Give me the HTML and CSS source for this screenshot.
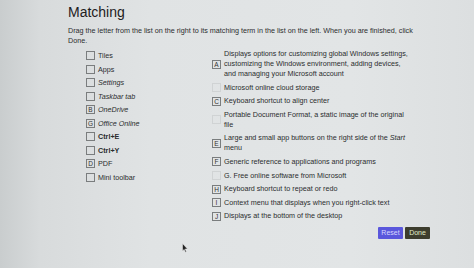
FILE: index.html
```html
<!DOCTYPE html>
<html>
<head>
<meta charset="utf-8">
<link rel="stylesheet" href="styles.css">
</head>
<body>
<div class="page">
  <h1 class="title">Matching</h1>
  <p class="intro">Drag the letter from the list on the right to its matching term in the list on the left. When you are finished, click Done.</p>
  <div class="lists">
    <ul class="terms">
      <li><span class="box"></span><span>Tiles</span></li>
      <li><span class="box"></span><span>Apps</span></li>
      <li><span class="box"></span><span class="it">Settings</span></li>
      <li><span class="box"></span><span class="it">Taskbar tab</span></li>
      <li><span class="box">B</span><span class="it">OneDrive</span></li>
      <li><span class="box">G</span><span class="it">Office Online</span></li>
      <li><span class="box"></span><span class="b">Ctrl+E</span></li>
      <li><span class="box"></span><span class="b">Ctrl+Y</span></li>
      <li><span class="box">D</span><span>PDF</span></li>
      <li><span class="box"></span><span>Mini toolbar</span></li>
    </ul>
    <ul class="defs">
      <li><span class="box">A</span><span>Displays options for customizing global Windows settings, customizing the Windows environment, adding devices, and managing your Microsoft account</span></li>
      <li><span class="box faint"></span><span>Microsoft online cloud storage</span></li>
      <li><span class="box">C</span><span>Keyboard shortcut to align center</span></li>
      <li><span class="box faint"></span><span>Portable Document Format, a static image of the original file</span></li>
      <li><span class="box">E</span><span>Large and small app buttons on the right side of the <i>Start</i> menu</span></li>
      <li><span class="box">F</span><span>Generic reference to applications and programs</span></li>
      <li><span class="box faint"></span><span>G. Free online software from Microsoft</span></li>
      <li><span class="box">H</span><span>Keyboard shortcut to repeat or redo</span></li>
      <li><span class="box">I</span><span>Context menu that displays when you right-click text</span></li>
      <li><span class="box">J</span><span>Displays at the bottom of the desktop</span></li>
    </ul>
  </div>
  <div class="actions">
    <button class="btn reset">Reset</button>
    <button class="btn done">Done</button>
  </div>
</div>
<svg class="cursor" width="6" height="10" viewBox="0 0 6 10"><path d="M0.5 0.5 L0.5 8 L2.2 6.4 L3.4 9.2 L4.4 8.8 L3.2 6 L5.5 6 Z" fill="#222" stroke="#eee" stroke-width="0.5"/></svg>
</body>
</html>
```
FILE: styles.css
```css
html, body {
  margin: 0;
  padding: 0;
}
body {
  width: 474px;
  height: 268px;
  overflow: hidden;
  position: relative;
  font-family: "Liberation Sans", Arial, sans-serif;
  color: #2b2d2e;
  background: linear-gradient(90deg, #c9cdce 0px, #d8dbdc 40px, #e0e3e4 150px, #e2e5e6 350px, #dcdfe0 474px);
}
.page {
  padding: 4px 0 0 68px;
}
.title {
  margin: 0;
  font-size: 14px;
  font-weight: normal;
  line-height: 17px;
  color: #1e2021;
}
.intro {
  margin: 5px 0 0 0;
  width: 356px;
  font-size: 7.2px;
  line-height: 10px;
}
.lists {
  display: grid;
  grid-template-columns: 126px 200px;
  margin: 3px 0 0 18px;
  font-size: 7.2px;
}
ul {
  list-style: none;
  margin: 0;
  padding: 0;
}
.terms li {
  display: flex;
  align-items: center;
  gap: 3px;
  height: 13.5px;
}
.defs {
  display: flex;
  flex-direction: column;
  gap: 3.6px;
}
.defs li {
  display: flex;
  align-items: center;
  gap: 3px;
  line-height: 10px;
}
.box {
  flex: none;
  width: 7px;
  height: 7px;
  border: 1px solid #7a7d7e;
  font-size: 6.5px;
  line-height: 7px;
  text-align: center;
  color: #333;
}
.box.faint {
  border-color: #d0d3d4;
}
.it { font-style: italic; }
.b { font-weight: bold; }
.actions {
  display: flex;
  justify-content: flex-end;
  gap: 2px;
  width: 362px;
  margin-top: 6px;
}
.btn {
  border: none;
  border-radius: 1px;
  font-family: "Liberation Sans", Arial, sans-serif;
  font-size: 7px;
  height: 12px;
  padding: 0 3px;
  line-height: 12px;
}
.reset {
  background: #5a57dc;
  color: #d6d6ff;
  width: 25px;
}
.done {
  background: #3d3d2e;
  color: #e0ecc8;
  width: 25px;
}
.cursor {
  position: absolute;
  left: 182px;
  top: 243px;
}
```
